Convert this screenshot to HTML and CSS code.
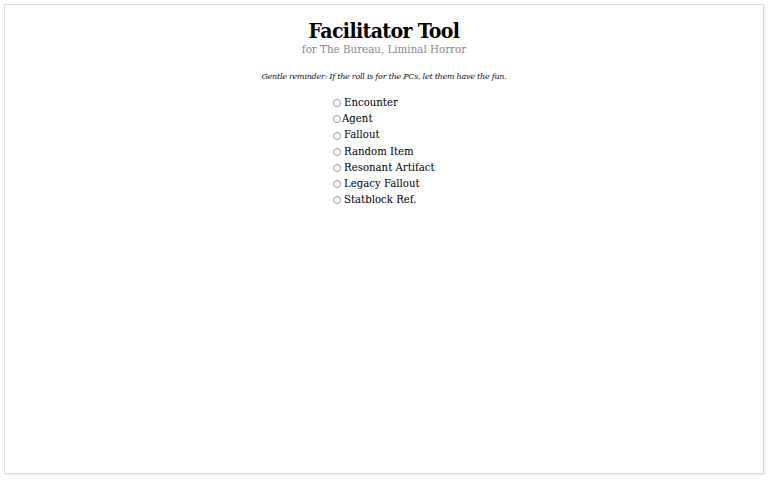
FILE: index.html
```
<!DOCTYPE html>
<html>
<head>
<meta charset="utf-8">
<link rel="stylesheet" href="styles.css">
</head>
<body>
<div class="frame">
  <header class="head">
    <h1 class="title">Facilitator Tool</h1>
    <div class="subtitle">for The Bureau, Liminal Horror</div>
  </header>
  <p class="reminder">Gentle reminder: If the roll is for the PCs, let them have the fun.</p>
  <ul class="options">
    <li><span class="radio"></span>Encounter</li>
    <li class="tight"><span class="radio"></span>Agent</li>
    <li><span class="radio"></span>Fallout</li>
    <li><span class="radio"></span>Random Item</li>
    <li><span class="radio"></span>Resonant Artifact</li>
    <li><span class="radio"></span>Legacy Fallout</li>
    <li><span class="radio"></span>Statblock Ref.</li>
  </ul>
</div>
</body>
</html>
```
FILE: styles.css
```
html, body { margin: 0; padding: 0; background: #fff; }
body { font-family: "DejaVu Serif", serif; color: #111; }
.frame {
  margin: 4px;
  height: 470px;
  border: 1px solid #dcdcdc;
  box-shadow: 1px 1px 2px rgba(0,0,0,0.08);
  box-sizing: border-box;
  display: flex;
  flex-direction: column;
  align-items: center;
}
.head { text-align: center; margin-top: 14px; }
.title { margin: 0; font-family: "DejaVu Serif Condensed", "DejaVu Serif", serif; font-size: 21px; line-height: 24px; font-weight: bold; letter-spacing: -0.6px; color: #000; }
.subtitle { font-size: 10.3px; line-height: 12px; color: #888; }
.reminder { margin: 16px 0 0; font-size: 8px; font-style: italic; line-height: 12px; letter-spacing: -0.25px; }
.options { list-style: none; margin: 12px 0 0 18px; padding: 0; align-self: center; width: 120px; }
.options li { font-family: "DejaVu Serif Condensed", "DejaVu Serif", serif; font-size: 11.3px; line-height: 16.2px; display: flex; align-items: center; white-space: nowrap; color: #000; }
.radio { width: 6px; height: 6px; border: 1px solid #999; border-radius: 50%; margin-right: 3px; flex: none; }
.options li.tight .radio { margin-right: 1px; }
```
